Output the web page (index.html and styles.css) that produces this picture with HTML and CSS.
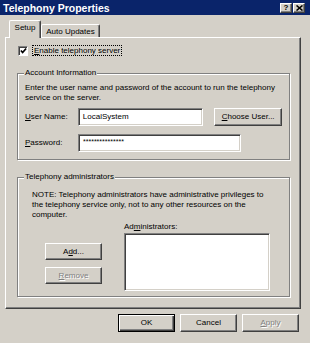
FILE: index.html
```html
<!DOCTYPE html>
<html>
<head>
<meta charset="utf-8">
<link rel="stylesheet" href="styles.css">
</head>
<body>
<div class="window">
  <div class="titlebar">
    <span class="title">Telephony Properties</span>
    <div class="tb-btns">
      <span class="tb-btn help">?</span>
      <span class="tb-btn"><svg width="7" height="6" viewBox="0 0 7 6"><path d="M0.5 0.5 L6.5 5.5 M6.5 0.5 L0.5 5.5" stroke="#000" stroke-width="1.6" fill="none"/></svg></span>
    </div>
  </div>
  <div class="tabs">
    <div class="tab active">Setup</div>
    <div class="tab">Auto Updates</div>
  </div>
  <div class="panel">
    <div class="check-row">
      <span class="checkbox"><svg width="8" height="8" viewBox="0 0 8 8"><path d="M1 3.5 L3 5.8 L7 1.2" stroke="#000" stroke-width="1.9" fill="none"/></svg></span>
      <span class="focus"><u>E</u>nable telephony server</span>
    </div>
    <fieldset class="group g1">
      <legend>Account Information</legend>
      <p class="desc">Enter the user name and password of the account to run the telephony<br>service on the server.</p>
      <div class="field-row r1">
        <span class="lbl"><u>U</u>ser Name:</span>
        <div class="input w-user">LocalSystem</div>
        <div class="btn choose"><u>C</u>hoose User...</div>
      </div>
      <div class="field-row r2">
        <span class="lbl"><u>P</u>assword:</span>
        <div class="input w-pass pass">***************</div>
      </div>
    </fieldset>
    <fieldset class="group g2">
      <legend>Telephony administrators</legend>
      <p class="note">NOTE: Telephony administrators have administrative privileges to<br>the telephony service only, not to any other resources on the<br>computer.</p>
      <div class="admin-row">
        <div class="admin-btns">
          <div class="btn">A<u>d</u>d...</div>
          <div class="btn disabled"><u>R</u>emove</div>
        </div>
        <div class="admin-list">
          <div class="list-label">Ad<u>m</u>inistrators:</div>
          <div class="listbox"></div>
        </div>
      </div>
    </fieldset>
  </div>
  <div class="footer">
    <div class="btn default">OK</div>
    <div class="btn">Cancel</div>
    <div class="btn disabled"><u>A</u>pply</div>
  </div>
</div>
</body>
</html>
```
FILE: styles.css
```css
* { box-sizing: border-box; }
html, body { margin: 0; padding: 0; }
body {
  width: 310px;
  height: 343px;
  overflow: hidden;
  background: #d4d0c8;
  font-family: "Liberation Sans", Arial, sans-serif;
  font-size: 8px;
  line-height: 10px;
  color: #000;
}
.window {
  width: 310px;
  height: 343px;
  background: #d4d0c8;
}
.titlebar {
  height: 15px;
  background: #0a246a;
  display: flex;
  align-items: center;
  justify-content: space-between;
  padding: 0 5px 0 3px;
}
.title {
  color: #fff;
  font-weight: bold;
  font-size: 10.5px;
  line-height: 12px;
}
.tb-btns { display: flex; gap: 1px; }
.tb-btn {
  width: 12px;
  height: 10px;
  background: #d4d0c8;
  border: 1px solid;
  border-color: #fff #404040 #404040 #fff;
  box-shadow: inset -1px -1px 0 #808080;
  display: flex;
  align-items: center;
  justify-content: center;
  font-weight: bold;
  font-size: 8px;
  line-height: 8px;
}
.tabs {
  display: flex;
  align-items: flex-end;
  padding-left: 9px;
  margin-top: 5px;
  margin-bottom: -1px;
  position: relative;
  z-index: 1;
}
.tab {
  height: 13px;
  width: 59px;
  margin-bottom: 1px;
  border: 1px solid;
  border-bottom: none;
  border-color: #fff #404040 #404040 #fff;
  box-shadow: inset -1px 0 0 #808080;
  border-radius: 2px 2px 0 0;
  background: #d4d0c8;
  display: flex;
  align-items: center;
  justify-content: center;
  padding-top: 1px;
}
.tab.active {
  width: 32px;
  height: 18px;
  margin-bottom: 0;
  padding-top: 0;
  padding-bottom: 3px;
}
.panel {
  margin-left: 5px;
  width: 296px;
  height: 272px;
  border: 1px solid;
  border-color: #fff #404040 #404040 #fff;
  box-shadow: inset -1px -1px 0 #808080;
  padding: 0 9px 0 11px;
  display: flex;
  flex-direction: column;
}
.check-row {
  margin-top: 7px;
  height: 11px;
  display: flex;
  align-items: center;
}
.checkbox {
  margin-left: 1px;
  width: 10px;
  height: 10px;
  background: #fff;
  border: 1px solid;
  border-color: #808080 #fff #fff #808080;
  box-shadow: inset 1px 1px 0 #404040;
  display: flex;
  align-items: center;
  justify-content: center;
  padding: 1px 0 0 1px;
}
.focus {
  margin-left: 4px;
  border: 1px dotted #000;
  padding: 0 1px 0 1px;
  height: 11px;
  line-height: 9px;
  white-space: nowrap;
}
.group {
  margin: 12px 1px 0 0;
  padding: 5px 7px 7px 7px;
  border: 1px solid #808080;
  box-shadow: 1px 1px 0 #fff, inset 1px 1px 0 #fff;
  min-width: 0;
}
.group legend {
  padding: 0 1px;
  margin-left: -1px;
  line-height: 10px;
  background: #d4d0c8;
}
.desc, .note {
  margin: 0;
  white-space: nowrap;
  line-height: 10px;
}
.note { margin-left: 7px; }
.g2 { padding-top: 8px; padding-bottom: 5px; }
.field-row {
  display: flex;
  align-items: center;
}
.r1 { margin-top: 5px; }
.r2 { margin-top: 8px; }
.lbl { width: 53px; white-space: nowrap; }
.input {
  height: 18px;
  background: #fff;
  border: 1px solid;
  border-color: #808080 #fff #fff #808080;
  box-shadow: inset 1px 1px 0 #404040, inset -1px -1px 0 #d4d0c8;
  padding: 3px 0 0 4px;
  white-space: nowrap;
  overflow: hidden;
}
.w-user { width: 126px; }
.w-pass { width: 163px; }
.pass { padding-top: 2px; letter-spacing: 0; font-size: 7px; }
.btn {
  height: 17px;
  width: 57px;
  border: 1px solid;
  border-color: #fff #404040 #404040 #fff;
  box-shadow: inset -1px -1px 0 #808080;
  background: #d4d0c8;
  display: flex;
  align-items: center;
  justify-content: center;
  white-space: nowrap;
}
.btn.choose { margin-left: 11px; width: 68px; height: 18px; }
.btn.disabled { color: #808080; text-shadow: 1px 1px 0 #fff; }
.btn.default {
  border: 1px solid #000;
  box-shadow: inset 1px 1px 0 #fff, inset -1px -1px 0 #404040, inset -2px -2px 0 #808080;
}
.admin-row { display: flex; }
.admin-btns {
  margin-left: 20px;
  padding-top: 23px;
  display: flex;
  flex-direction: column;
  gap: 7px;
}
.admin-list { margin-left: 22px; padding-top: 2px; }
.list-label { height: 10px; }
.listbox {
  margin-top: 1px;
  width: 146px;
  height: 58px;
  background: #fff;
  border: 1px solid;
  border-color: #808080 #fff #fff #808080;
  box-shadow: inset 1px 1px 0 #404040, inset -1px -1px 0 #d4d0c8;
}
.footer {
  margin-top: 5px;
  display: flex;
  justify-content: flex-end;
  gap: 5px;
  padding-right: 11px;
}
.footer .btn { height: 18px; }
```
